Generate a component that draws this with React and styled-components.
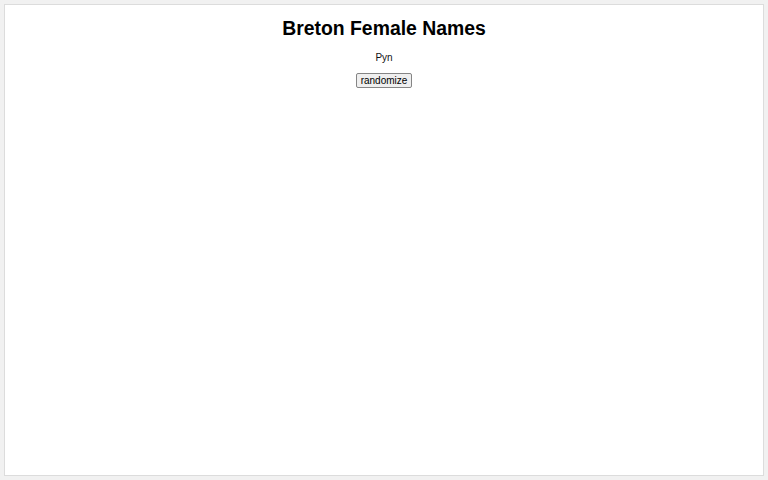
import React, { useState } from 'react'
import styled, { createGlobalStyle } from 'styled-components'

const names = ['Pyn', 'Anna', 'Maiwenn', 'Gwenaelle', 'Soazig', 'Nolwenn', 'Rozenn', 'Enora']

const GlobalStyle = createGlobalStyle`
  html, body {
    margin: 0;
    padding: 0;
    height: 100%;
    background: #f1f1f1;
    font-family: "Liberation Sans", Arial, sans-serif;
  }
  #root {
    height: 100%;
  }
`

const Page = styled.div`
  box-sizing: border-box;
  height: 480px;
  padding: 4px 4px 4px 4px;
`

const Panel = styled.main`
  box-sizing: border-box;
  height: 100%;
  background: #fff;
  border: 1px solid #dcdcdc;
  display: flex;
  flex-direction: column;
  align-items: center;
  padding-top: 12px;
`

const Title = styled.h1`
  margin: 0;
  font-size: 19.4px;
  font-weight: bold;
  color: #000;
  line-height: 22px;
`

const Name = styled.p`
  margin: 13px 0 0;
  font-size: 10px;
  line-height: 12px;
  color: #111;
`

const Button = styled.button`
  margin-top: 9px;
  font-family: "Liberation Sans", Arial, sans-serif;
  font-size: 10px;
  line-height: 11px;
  padding: 1px 4px;
  color: #000;
  background: #efefef;
  border: 1px solid #858585;
  border-radius: 2px;
`

function App() {
  const [name, setName] = useState(names[0])

  const randomize = () => {
    setName(names[Math.floor(Math.random() * names.length)])
  }

  return (
    <Page>
      <GlobalStyle />
      <Panel>
        <Title>Breton Female Names</Title>
        <Name>{name}</Name>
        <Button onClick={randomize}>randomize</Button>
      </Panel>
    </Page>
  )
}

export default App
